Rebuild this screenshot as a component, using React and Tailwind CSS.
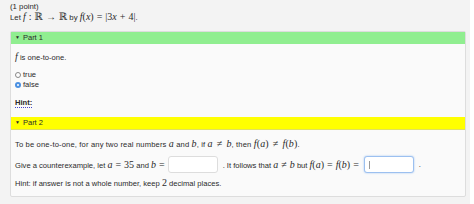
import React from 'react';

const serif = { fontFamily: '"Liberation Serif", "DejaVu Serif", serif' };

const M = ({ children }) => (
  <span className="italic text-[10px]" style={serif}>{children}</span>
);
const R = ({ children }) => (
  <span className="text-[10px]" style={serif}>{children}</span>
);
const Rel = ({ children, wide }) => (
  <span className={wide ? 'text-[10px] mx-[4px]' : 'text-[10px] mx-[3px]'} style={serif}>{children}</span>
);

export default function App() {
  return (
    <div className="w-[474px] h-[204px] bg-white flex text-[#2a2a2a]" style={{ fontFamily: '"Liberation Sans", Arial, sans-serif' }}>
      <div className="w-[470px] h-full bg-[#f3f3f3] pl-[10px] pr-[4px] pt-[2px]">
        <div className="text-[7.8px] leading-[10px] h-[10px]">(1 point)</div>
        <div className="text-[7.8px] leading-[10px] h-[10px] whitespace-nowrap">
          Let <M>f</M><Rel>:</Rel><R>ℝ</R><Rel>→</Rel><R>ℝ</R> by <M>f</M><R>(</R><M>x</M><R>)</R><Rel>=</Rel><R>|3</R><M>x</M><Rel>+</Rel><R>4|</R>.
        </div>

        <div className="mt-[9px] border border-[#ddd] rounded-[2px] bg-[#fafafa]">
          <div className="bg-[#90ee90] h-[12px] flex items-center pl-[4px] text-[7.5px]">
            <span className="text-[5px] mr-[3px]">▼</span>Part 1
          </div>
          <div className="px-[4px] pt-[8px] pb-[9px] text-[7.6px]">
            <div className="leading-[10px] h-[10px]"><M>f</M> is one-to-one.</div>
            <div className="mt-[8px] flex items-center gap-[2px] leading-[10px] h-[10px]">
              <span className="w-[6px] h-[6px] rounded-full border border-[#888] bg-white" />
              true
            </div>
            <div className="flex items-center gap-[2px] leading-[10px] h-[10px]">
              <span className="w-[6px] h-[6px] rounded-full bg-[#4a90e2] flex items-center justify-center">
                <span className="w-[2px] h-[2px] rounded-full bg-white" />
              </span>
              false
            </div>
            <div className="mt-[8px] font-bold leading-[10px] h-[10px]">
              <span className="border-b border-dotted border-[#44c]">Hint:</span>
            </div>
          </div>
          <div className="bg-[#ffff00] h-[13px] flex items-center pl-[4px] text-[7.5px] border-b border-[#e0e060]">
            <span className="text-[5px] mr-[3px]">▼</span>Part 2
          </div>
          <div className="px-[4px] pt-[9px] pb-[8px] text-[7.6px] whitespace-nowrap">
            <div className="leading-[10px] h-[10px] tracking-[0.15px]">
              To be one-to-one, for any two real numbers <M>a</M> and <M>b</M>, if <M>a</M><Rel wide>≠</Rel><M>b</M>, then <M>f</M><R>(</R><M>a</M><R>)</R><Rel wide>≠</Rel><M>f</M><R>(</R><M>b</M><R>)</R>.
            </div>
            <div className="mt-[7px] h-[17px] flex items-center">
              <span>Give a counterexample, let <M>a</M><Rel>=</Rel><R>35</R> and <M>b</M><Rel>=</Rel></span>
              <span className="w-[50px] h-[17px] bg-white border border-[#ddd] rounded-[3px]" />
              <span className="ml-[5px]">. It follows that <M>a</M><Rel>≠</Rel><M>b</M> but <M>f</M><R>(</R><M>a</M><R>)</R><Rel>=</Rel><M>f</M><R>(</R><M>b</M><R>)</R><Rel>=</Rel></span>
              <span className="ml-[2px] w-[50px] h-[17px] bg-white border border-[#9cc0f0] rounded-[3px] shadow-[0_0_2px_#9cc0f0] flex items-center pl-[4px]">
                <span className="w-px h-[8px] bg-[#999]" />
              </span>
              <span className="ml-[5px]">.</span>
            </div>
            <div className="mt-[5px] leading-[10px] h-[10px]">
              Hint: if answer is not a whole number, keep <R>2</R> decimal places.
            </div>
          </div>
        </div>
      </div>
    </div>
  );
}
